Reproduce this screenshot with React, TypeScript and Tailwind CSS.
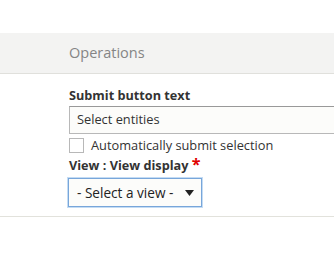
import React from "react";

export default function App() {
  return (
    <div className="w-[334px] h-[270px] bg-white overflow-hidden" style={{ fontFamily: '"Open Sans", "Noto Sans", sans-serif' }}>
      <div className="h-[33px]" />
      <div className="h-[41px] bg-[#f3f3f2] border-b border-[#e0e0dc] pl-[69px] flex items-center">
        <span className="text-[14.5px] text-[#858585] leading-none">Operations</span>
      </div>
      <div className="pl-[69px] border-b border-[#e2e2dc] pb-[8px]">
        <div className="pt-[12px] text-[12.7px] font-bold text-[#333] leading-[18px] whitespace-nowrap">Submit button text</div>
        <div className="mt-[2px] h-[28px] w-[300px] border border-[#b8b8b8] border-t-[#999] bg-[#fcfcfa] flex items-center pl-[7px] text-[12.8px] text-[#333] whitespace-nowrap">
          Select entities
        </div>
        <div className="mt-[3px] flex items-center h-[16px]">
          <div className="w-[15px] h-[15px] border border-[#b8b8b8] bg-white" />
          <span className="ml-[7px] text-[12.8px] text-[#333] leading-none whitespace-nowrap">Automatically submit selection</span>
        </div>
        <div className="mt-[3px] text-[12.7px] font-bold text-[#333] leading-[18px] whitespace-nowrap">
          View : View display <span className="text-[#e00000] text-[16px] leading-none">*</span>
        </div>
        <div className="mt-[3px] ml-[-2px] w-[136px] h-[31px] p-[1px] bg-[#c4dcf4]">
          <div className="h-full border border-[#78a6da] bg-[#fcfcfa] flex items-center pl-[8px] pr-[7px] justify-between">
            <span className="text-[13.6px] text-[#222] leading-none whitespace-nowrap">- Select a view -</span>
            <svg width="9" height="6" viewBox="0 0 9 6" className="shrink-0"><path d="M0 0 H9 L4.5 6 Z" fill="#222" /></svg>
          </div>
        </div>
      </div>
    </div>
  );
}
